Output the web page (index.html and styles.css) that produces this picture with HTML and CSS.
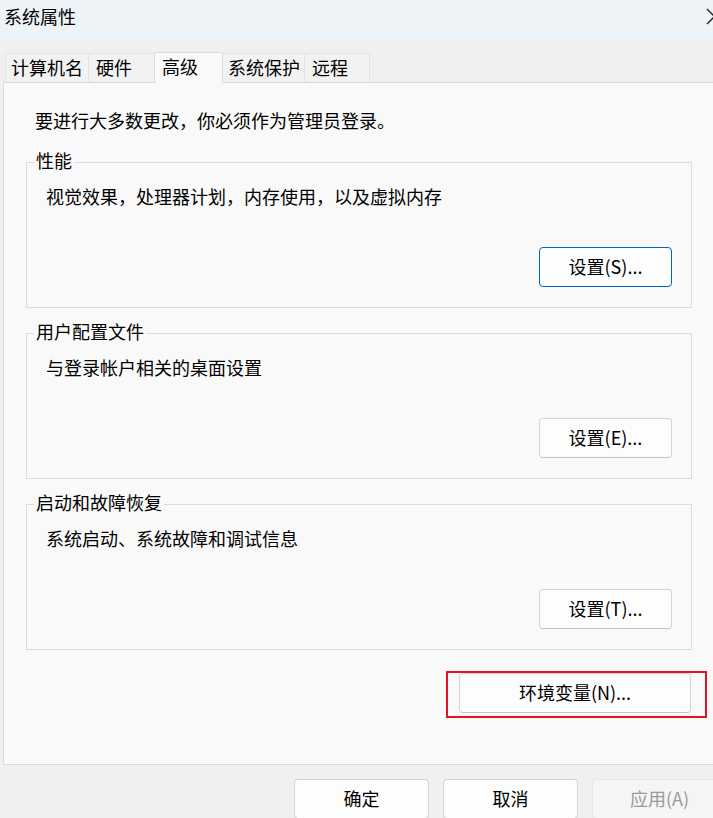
FILE: index.html
```html
<html>
<head>
  <meta charset="UTF-8" />
  <link rel="stylesheet" href="styles.css">
</head>
<body>
<div class="window">
  <div class="titlebar">
    <span class="title">系统属性</span>
    <svg class="chevron" width="10" height="18" viewBox="0 0 10 18">
      <path d="M1 1 L8.5 8.5 L1 16" fill="none" stroke="#1b1b1b" stroke-width="1.3"/>
    </svg>
  </div>

  <div class="tabs">
    <div class="tab tab-name">计算机名</div>
    <div class="tab tab-hw">硬件</div>
    <div class="tab tab-adv selected">高级</div>
    <div class="tab tab-prot">系统保护</div>
    <div class="tab tab-remote">远程</div>
  </div>

  <div class="panel">
    <p class="notice">要进行大多数更改，你必须作为管理员登录。</p>

    <fieldset class="group">
      <legend>性能</legend>
      <div class="group-body">
        <p class="desc">视觉效果，处理器计划，内存使用，以及虚拟内存</p>
        <div class="actions"><button class="btn focused">设置(S)...</button></div>
      </div>
    </fieldset>

    <fieldset class="group">
      <legend>用户配置文件</legend>
      <div class="group-body">
        <p class="desc">与登录帐户相关的桌面设置</p>
        <div class="actions"><button class="btn">设置(E)...</button></div>
      </div>
    </fieldset>

    <fieldset class="group">
      <legend>启动和故障恢复</legend>
      <div class="group-body">
        <p class="desc">系统启动、系统故障和调试信息</p>
        <div class="actions"><button class="btn">设置(T)...</button></div>
      </div>
    </fieldset>

    <div class="env-row">
      <div class="highlight">
        <button class="btn env">环境变量(N)...</button>
      </div>
    </div>
  </div>

  <div class="footer">
    <button class="btn dialog">确定</button>
    <button class="btn dialog">取消</button>
    <button class="btn dialog" disabled>应用(A)</button>
  </div>
</div>
</body>
</html>
```

FILE: styles.css
```css
body {
    margin: 0;
    overflow: hidden;
    background: #f0f0f0;
    font-family: "Noto Sans CJK SC", sans-serif;
    font-size: 18px;
    color: #000;
}

.window {
    width: 713px;
    height: 818px;
    overflow: hidden;
}

.titlebar {
    height: 38px;
    background: #eef3f8;
    display: flex;
    align-items: flex-start;
}

.title {
    padding-left: 4px;
    line-height: 32px;
}

.chevron {
    margin-left: auto;
    margin-top: 8px;
    margin-right: -3px;
}

/* tab strip */

.tabs {
    height: 44px;
    padding-left: 5px;
    display: flex;
    align-items: flex-end;
    box-sizing: border-box;
}

.tab {
    height: 29px;
    box-sizing: border-box;
    border: 1px solid #e3e3e3;
    border-bottom: none;
    background: #f2f2f2;
    line-height: 27px;
    padding-left: 6px;
    margin-left: -1px;
}

.tab-name { width: 84px; margin-left: 0; padding-left: 5px; }
.tab-hw { width: 67px; padding-left: 7px; }
.tab-adv { width: 69px; padding-left: 7px; }
.tab-prot { width: 83px; padding-left: 5px; }
.tab-remote { width: 66px; padding-left: 7px; }

.tab.selected {
    height: 31px;
    margin-bottom: -1px;
    background: #f9f9f9;
    border-color: #dcdcdc;
    position: relative;
    z-index: 1;
    line-height: 27px;
}

/* panel */

.panel {
    margin-left: 3px;
    height: 683px;
    box-sizing: border-box;
    border: 1px solid #dadada;
    border-right: none;
    background: #f9f9f9;
}

.notice {
    margin: 25px 0 0 0;
    padding-left: 31px;
    line-height: 24px;
}

.group {
    margin: 19px 0 0 22px;
    padding: 0;
    width: 666px;
    box-sizing: border-box;
    border: 1px solid #dcdcdc;
    min-inline-size: 0;
}

.group + .group {
    margin-top: 14px;
}

.group legend {
    margin-left: 7px;
    padding: 0 2px 4px 2px;
    line-height: 18px;
}

.group-body {
    padding: 11px 19px 20px 19px;
}

.desc {
    margin: 0;
    line-height: 24px;
}

.actions {
    margin-top: 39px;
    display: flex;
    justify-content: flex-end;
}

/* buttons */

.btn {
    font-family: inherit;
    font-size: 18px;
    color: #000;
    height: 40px;
    width: 133px;
    box-sizing: border-box;
    background: #fdfdfd;
    border: 1px solid #d4d4d4;
    border-bottom-color: #c4c4c4;
    border-radius: 4px;
    padding: 0 0 2px 0;
    line-height: 36px;
}

.btn.focused {
    border: 1px solid #0067c0;
}

.btn:disabled {
    background: #f5f5f5;
    border-color: #e6e6e6;
    color: #9a9a9a;
}

.env-row {
    margin-top: 21px;
    display: flex;
    justify-content: flex-end;
    padding-right: 6px;
}

.highlight {
    border: 2px solid #e81123;
    padding: 0 14px 3px 11px;
}

.btn.env {
    width: 232px;
}

/* dialog buttons */

.footer {
    padding: 14px 0 0 294px;
    display: flex;
    gap: 14px;
}

.btn.dialog {
    width: 135px;
    flex: none;
    padding-bottom: 4px;
}
```
